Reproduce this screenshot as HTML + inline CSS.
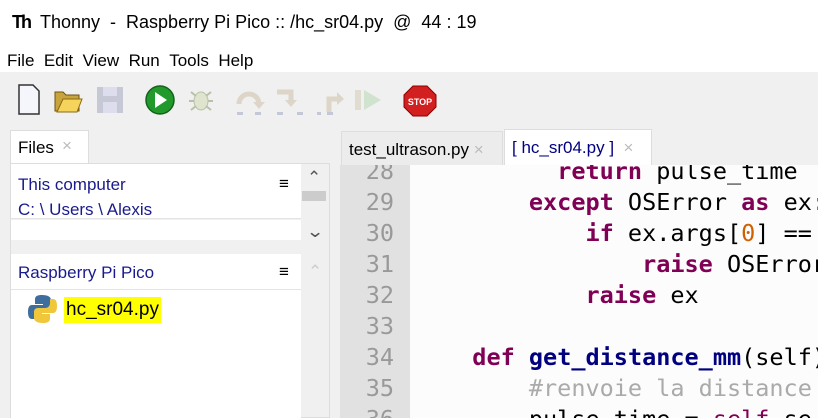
<!DOCTYPE html>
<html><head><meta charset="utf-8"><style>
*{margin:0;padding:0;box-sizing:border-box}
body{width:818px;height:418px;overflow:hidden;background:#f0f0f0;font-family:"Liberation Sans",sans-serif;position:relative;color:#000}
.a{position:absolute}
.ui{font-size:17px;white-space:nowrap}
.code{font-family:"DejaVu Sans Mono","Liberation Mono",monospace;font-size:23.5px;white-space:pre;line-height:31px}
.k{color:#7f0055;font-weight:bold}
.n{color:#000}
.b{color:#000080;font-weight:bold}
.c{color:#aaa}
</style></head><body>
<div class="a" style="left:0;top:0;width:818px;height:72px;background:#fff"></div>
<div class="a ui" style="left:12px;top:12px;font-size:18px;font-weight:bold;letter-spacing:-2px">Th</div>
<div class="a ui" style="left:40px;top:12px;font-size:18px">Thonny&nbsp; - &nbsp;Raspberry Pi Pico :: /hc_sr04.py &nbsp;@ &nbsp;44 : 19</div>
<div class="a ui" style="left:7px;top:51px">File&nbsp;&nbsp;Edit&nbsp;&nbsp;View&nbsp;&nbsp;Run&nbsp;&nbsp;Tools&nbsp;&nbsp;Help</div>
<svg class="a" style="left:15px;top:82px" width="440" height="36">
<path d="M4 3h14l6 6v23H4z" fill="#f4f6fb" stroke="#333" stroke-width="1.5"/>
<path d="M40 10h8l3 3h13v16H40z" fill="#c9a33b" stroke="#6b5414"/><path d="M42 30l6-13h19l-5 13z" fill="#f6d35b" stroke="#8a6b14"/>
<rect x="82" y="5" width="26" height="26" fill="#c6c8d6"/><rect x="88" y="5" width="14" height="9" fill="#dde"/><rect x="88" y="20" width="14" height="11" fill="#dde"/>
<circle cx="145" cy="18" r="14" fill="#229a2b" stroke="#14621a" stroke-width="1.5"/><path d="M140 10v16l12-8z" fill="#fff"/>
<ellipse cx="186" cy="19" rx="7" ry="9" fill="#dfe4cf" stroke="#b9c0a8"/><path d="M176 10l5 4M196 10l-5 4M174 19h5M193 19h5M176 28l5-4M196 28l-5-4" stroke="#b9c0a8" stroke-width="2"/>
<path d="M224 22a10 10 0 0 1 20 0" fill="none" stroke="#ddd6c8" stroke-width="5"/><path d="M238 20h12l-6 7z" fill="#ddd6c8"/><rect x="222" y="30" width="6" height="3" fill="#c4c7d6"/><rect x="240" y="30" width="6" height="3" fill="#c4c7d6"/>
<path d="M262 10h14v10" fill="none" stroke="#ddd6c8" stroke-width="5"/><path d="M270 18h12l-6 7z" fill="#ddd6c8"/><rect x="262" y="30" width="6" height="3" fill="#c4c7d6"/><rect x="282" y="30" width="6" height="3" fill="#c4c7d6"/>
<rect x="302" y="30" width="4" height="3" fill="#c4c7d6"/><path d="M314 30V17h10" fill="none" stroke="#ddd6c8" stroke-width="5"/><path d="M322 10v13l7-6z" fill="#ddd6c8"/><rect x="312" y="30" width="6" height="3" fill="#c4c7d6"/>
<rect x="340" y="8" width="6" height="20" fill="#e0ddd0"/><path d="M349 8v20l17-10z" fill="#cfe3cf"/>
<polygon points="398,4 412,4 421,13 421,25 412,34 398,34 389,25 389,13" fill="#d21f1f" stroke="#8b0000"/><text x="405" y="23" font-size="9" font-weight="bold" fill="#fff" text-anchor="middle" font-family="Liberation Sans">STOP</text>
</svg>
<div class="a" style="left:10px;top:130px;width:79px;height:35px;background:#fff;border:1px solid #ddd;border-bottom:none"></div>
<div class="a ui" style="left:18px;top:138px">Files</div>
<div class="a ui" style="left:62px;top:136px;color:#bbb">×</div>
<div class="a" style="left:10px;top:163px;width:320px;height:255px;border:1px solid #ddd;background:#f0f0f0"></div>
<div class="a" style="left:11px;top:164px;width:290px;height:55px;background:#fff;border-bottom:1px solid #e4e4e4"></div>
<div class="a" style="left:11px;top:220px;width:290px;height:20px;background:#fff"></div>
<div class="a ui" style="left:18px;top:175px;color:#1a1a8c">This computer</div>
<div class="a ui" style="left:18px;top:200px;color:#1a1a8c">C: \ Users \ Alexis</div>
<div class="a ui" style="left:279px;top:174px">≡</div>
<div class="a ui" style="left:307px;top:168px;color:#555">⌃</div>
<div class="a" style="left:302px;top:191px;width:24px;height:10px;background:#ccc"></div>
<div class="a ui" style="left:308px;top:222px;color:#555;transform:scaleX(1.3)">⌄</div>
<div class="a" style="left:11px;top:254px;width:290px;height:164px;background:#fff"></div>
<div class="a" style="left:11px;top:289px;width:290px;height:1px;background:#e4e4e4"></div>
<div class="a ui" style="left:18px;top:263px;color:#1a1a8c">Raspberry Pi Pico</div>
<div class="a ui" style="left:279px;top:262px">≡</div>
<div class="a ui" style="left:308px;top:262px;color:#ccc">⌃</div>
<svg class="a" style="left:27px;top:293px" width="32" height="32"><path d="M15 2c-7 0-7 3-7 5v4h8v1H5c-3 0-4 3-4 7s1 7 4 7h3v-4c0-3 2-5 5-5h7c3 0 4-2 4-4V7c0-3-3-5-9-5z" fill="#3d6e9e"/><path d="M16 30c7 0 7-3 7-5v-4h-8v-1h11c3 0 4-3 4-7s-1-7-4-7h-3v4c0 3-2 5-5 5h-7c-3 0-4 2-4 4v6c0 3 3 5 9 5z" fill="#f0c63a"/></svg>
<div class="a ui" style="left:64px;top:297px;background:#ffff00;padding:2px 2px;font-size:19px">hc_sr04.py</div>
<div class="a" style="left:341px;top:131px;width:162px;height:34px;background:#ececec;border:1px solid #ddd;border-bottom:none"></div>
<div class="a ui" style="left:349px;top:140px">test_ultrason.py <span style="color:#bbb">×</span></div>
<div class="a" style="left:504px;top:129px;width:148px;height:36px;background:#fff;border:1px solid #ddd;border-bottom:none"></div>
<div class="a ui" style="left:512px;top:138px;color:#000080">[ hc_sr04.py ] <span style="color:#bbb">&nbsp;×</span></div>
<div class="a" style="left:340px;top:165px;width:478px;height:253px;background:#fcfcfc;overflow:hidden">
<div class="a" style="left:0;top:0;width:70px;height:253px;background:#e1e1e1"></div>
<div class="a code" style="left:0;top:-9px;width:54px;text-align:right;color:#999">28
29
30
31
32
33
34
35
36</div>
<div class="a code" style="left:104px;top:-9px"><span class="n">        </span><span class="k">return</span> pulse_time
      <span class="k">except</span> OSError <span class="k">as</span> ex:
          <span class="k">if</span> ex.args[<span style="color:#d06000">0</span>] ==
              <span class="k">raise</span> OSError
          <span class="k">raise</span> ex

  <span class="k">def</span> <span class="b">get_distance_mm</span>(self)
      <span class="c">#renvoie la distance</span>
      pulse_time = <span style="color:#7f0055">self</span>.se</div>
</div>
</body></html>
